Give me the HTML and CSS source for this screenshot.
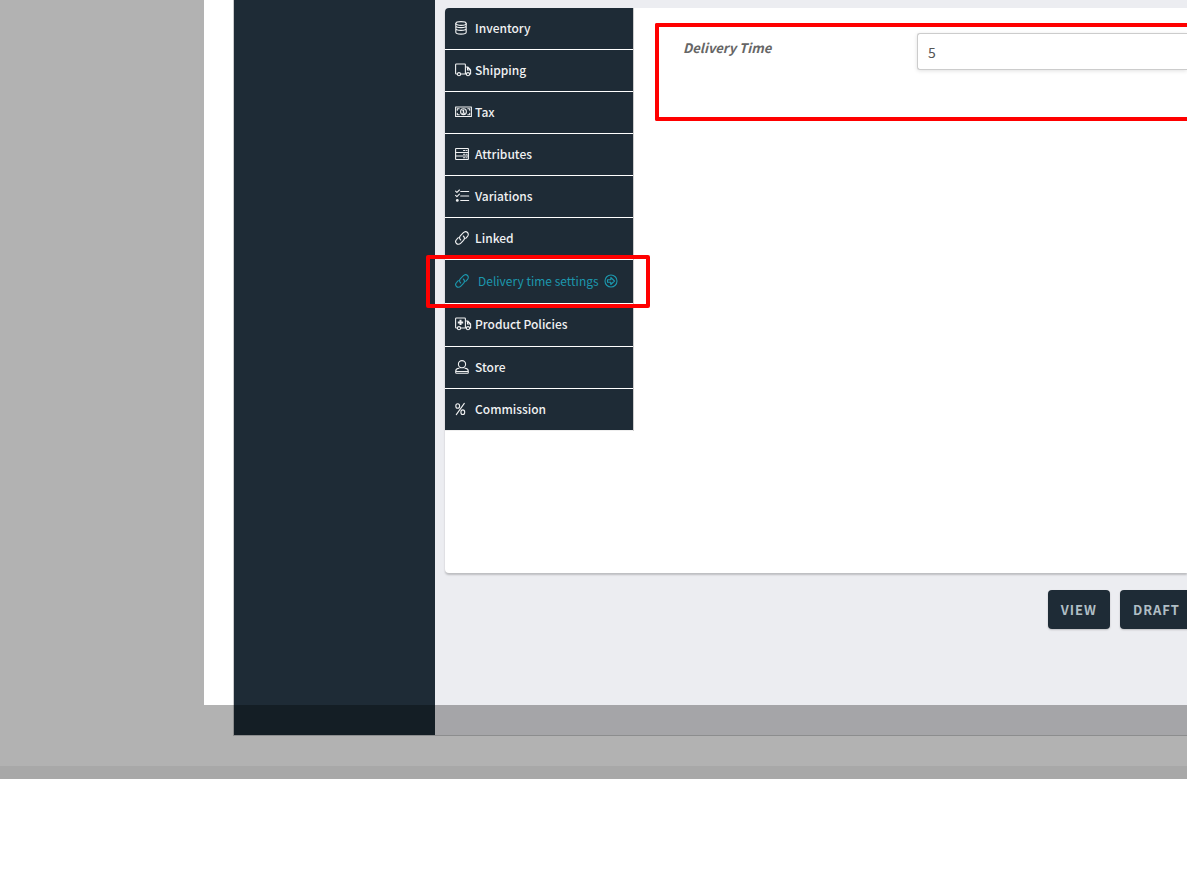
FILE: index.html
```html
<!DOCTYPE html>
<html lang="en">
<head>
  <meta charset="UTF-8" />
  <meta name="viewport" content="width=device-width, initial-scale=1.0" />
  <title>Delivery time settings</title>
  <link rel="stylesheet" href="styles.css">
</head>
<body>
  <div class="stage">
    <div class="dashboard">
      <aside class="sidebar"></aside>
      <main class="main">
        <section class="panel">
          <nav class="tabs">
            <a class="tab" href="#inventory">
              <svg class="icon" viewBox="0 0 18 14"><ellipse cx="6" cy="2.5" rx="5.2" ry="1.9"/><path d="M.8 2.5v2.2c0 1.1 2.3 1.9 5.2 1.9s5.2-.8 5.2-1.9V2.5M.8 5.2v2.3c0 1.1 2.3 1.9 5.2 1.9s5.2-.8 5.2-1.9V5.2M.8 8v3.2c0 1.1 2.3 1.9 5.2 1.9s5.2-.8 5.2-1.9V8"/></svg>
              <span>Inventory</span>
            </a>
            <a class="tab" href="#shipping">
              <svg class="icon" viewBox="0 0 18 14"><path d="M2.3 11H1.4a.8.8 0 0 1-.8-.8V1.8c0-.5.3-.8.8-.8h8.2c.5 0 .8.3.8.8V11H5.7M10.4 4h2.3l2.9 3v4h-.8M11.3 11h-.9M12.5 4.2V7h3"/><circle cx="4" cy="11.2" r="1.6"/><circle cx="13" cy="11.2" r="1.6"/></svg>
              <span>Shipping</span>
            </a>
            <a class="tab" href="#tax">
              <svg class="icon" viewBox="0 0 18 14"><rect x=".6" y="2" width="15.8" height="9.5"/><path d="M2.3 5.300V3.700h1.900M12.800 3.700h1.900v1.600M2.300 8.200v1.600h1.900M12.800 9.800h1.900V8.200"/><circle cx="8.5" cy="6.7" r="2.9"/><path d="M7.700 5.800l.9-.6v3M7.500 8.300h2.200"/></svg>
              <span>Tax</span>
            </a>
            <a class="tab" href="#attributes">
              <svg class="icon" viewBox="0 0 18 14"><rect x=".6" y="1.5" width="12.8" height="11" rx=".5"/><path d="M.6 5.500h12.800M.6 9h12.800M8.500 3.500h1.500M11.500 3.500h.5M8.500 7.300h1.500M11.500 7.300h.5M8.500 10.800h1.500M11.500 10.800h.5"/></svg>
              <span>Attributes</span>
            </a>
            <a class="tab" href="#variations">
              <svg class="icon" viewBox="0 0 18 14"><path d="M.6 2.200l1.300 1.200L4.400 1M.6 6.400l1.300 1.200 2.500-2.400M5.700 2.500h8M5.700 7h8M5.700 11.500h8"/><circle class="icon-fill" cx="2.3" cy="11.4" r="1.4"/></svg>
              <span>Variations</span>
            </a>
            <a class="tab" href="#linked">
              <svg class="icon" viewBox="0 0 18 14"><path d="M5.700 9C4.300 7.700 4.300 6 5.500 4.700l2.900-3C9.700.4 11.400.4 12.500 1.500s1.100 2.800-.2 4.100l-1.600 1.700M8.300 5c1.400 1.300 1.400 3 .2 4.300l-2.900 3c-1.300 1.300-3 1.300-4.100.2s-1.100-2.800.2-4.100l1.600-1.700"/></svg>
              <span>Linked</span>
            </a>
            <a class="tab tab-active" href="#delivery">
              <svg class="icon" viewBox="0 0 18 14"><path d="M5.700 9C4.300 7.700 4.300 6 5.500 4.700l2.900-3C9.700.4 11.400.4 12.500 1.500s1.100 2.800-.2 4.100l-1.600 1.700M8.300 5c1.400 1.300 1.400 3 .2 4.300l-2.900 3c-1.300 1.300-3 1.300-4.100.2s-1.100-2.800.2-4.100l1.600-1.700"/></svg>
              <span>Delivery time settings</span>
              <svg class="icon icon-arrow" viewBox="0 0 14 14"><circle cx="7" cy="7" r="6"/><path d="M3.500 5.700h3.300V3.500L10.500 7l-3.700 3.500V8.300H3.500z"/></svg>
            </a>
            <a class="tab tab-policies" href="#policies">
              <svg class="icon" viewBox="0 0 18 14"><path d="M2.3 11H1.4a.8.8 0 0 1-.8-.8V1.8c0-.5.3-.8.8-.8h8.2c.5 0 .8.3.8.8V11H5.7M10.4 4h2.3l2.9 3v4h-.8M11.3 11h-.9M12.5 4.2V7h3"/><circle cx="4" cy="11.2" r="1.6"/><circle cx="13" cy="11.2" r="1.6"/><path class="icon-bold" d="M5.5 2.700v5.400M2.800 5.400h5.400"/></svg>
              <span>Product Policies</span>
            </a>
            <a class="tab" href="#store">
              <svg class="icon" viewBox="0 0 18 14"><circle cx="7" cy="4.2" r="3.6"/><path d="M4 8.300C1.800 8.500.7 9.600.7 11.200v1.300c0 .5.3.8.8.8h11c.5 0 .8-.3.8-.8v-1.300c0-1.600-1.100-2.700-3.300-2.900M.8 11.500h12.400"/></svg>
              <span>Store</span>
            </a>
            <a class="tab" href="#commission">
              <svg class="icon" viewBox="0 0 18 14"><ellipse cx="2.7" cy="4" rx="1.9" ry="2.3"/><ellipse cx="7.8" cy="10.2" rx="1.9" ry="2.3"/><path d="M9.300 1.400L1.300 12.600"/></svg>
              <span>Commission</span>
            </a>
          </nav>
          <form class="field">
            <label class="field-label" for="deliveryTime">Delivery Time</label>
            <input class="field-input" type="text" id="deliveryTime" value="5" />
          </form>
        </section>
        <div class="actions">
          <button class="btn" type="button">VIEW</button>
          <button class="btn" type="button">DRAFT</button>
        </div>
      </main>
    </div>
    <div class="spotlight"></div>
  </div>
  <footer class="strip"></footer>
</body>
</html>
```

FILE: styles.css
```css
* {
  box-sizing: border-box;
}
body {
  margin: 0;
  background-color: #fff;
  font-family: "Noto Sans CJK SC", "Open Sans", sans-serif;
  overflow-x: hidden;
}
.stage {
  position: relative;
  overflow: hidden;
  padding: 0 0 30px 233px;
}
.dashboard {
  display: flex;
  min-height: 736px;
  border-left: 1px solid #c9cacc;
  border-bottom: 1px solid #c9cacc;
}
.sidebar {
  flex: 0 0 201px;
  background-color: #1e2b36;
}
.main {
  flex: 1;
  min-width: 0;
  padding: 8px 0 0 10px;
  background-color: #ecedf1;
}
.panel {
  display: flex;
  align-items: flex-start;
  min-height: 565px;
  background-color: #fff;
  border-radius: 4px 0 0 4px;
  box-shadow: 0 2px 2px rgba(0, 0, 0, 0.2);
}
.tabs {
  flex: 0 0 189px;
  border-right: 1px solid #ccc;
}
.tab {
  display: flex;
  align-items: center;
  gap: 2px;
  height: 42px;
  padding: 0 0 2px 10px;
  border-bottom: 1px solid #fff;
  background-color: #1e2b36;
  color: #f0f1f2;
  font-size: 12px;
  font-weight: 500;
  line-height: 18px;
  text-decoration: none;
}
.tab:first-child {
  border-top-left-radius: 4px;
}
.tab:last-child {
  border-bottom-color: #eee;
}
.tab-active {
  position: relative;
  gap: 5px;
  height: 44px;
  color: #1c97ad;
  font-weight: 400;
}
/* marker around the selected tab */
.tab-active::after {
  content: "";
  position: absolute;
  inset: -5px -17px -5px -19px;
  border: 4px solid #f00;
  border-radius: 2px;
}
.tab-policies {
  height: 43px;
}
.icon {
  flex: none;
  width: 18px;
  height: 14px;
  fill: none;
  stroke: currentColor;
  stroke-width: 1.1;
  stroke-linecap: round;
  stroke-linejoin: round;
}
.icon-arrow {
  width: 14px;
}
.icon-fill {
  fill: currentColor;
  stroke: none;
}
.icon-bold {
  stroke-width: 2;
  stroke-linecap: butt;
}
.field {
  flex: 1;
  display: flex;
  align-items: flex-start;
  min-width: 0;
  height: 98px;
  margin: 15px 0 0 21px;
  padding: 6px 0 0 24px;
  border: 4px solid #f00;
  border-right: 0;
  border-radius: 2px 0 0 2px;
}
.field-label {
  flex: 0 0 234px;
  padding-top: 4px;
  color: #666;
  font-size: 13px;
  font-style: italic;
  font-weight: 700;
  line-height: 22px;
}
.field-input {
  flex: 1;
  min-width: 0;
  height: 37px;
  padding: 0 10px;
  border: 1px solid #ccc;
  border-right: 0;
  border-radius: 3px 0 0 3px;
  box-shadow: 0 1px 4px rgba(0, 0, 0, 0.12);
  color: #555;
  font-family: "Noto Sans CJK SC", "Open Sans", sans-serif;
  font-size: 14px;
}
.actions {
  display: flex;
  justify-content: flex-end;
  gap: 10px;
  margin: 17px -6px 0 0;
}
.btn {
  height: 39px;
  padding: 0 13px;
  border: 0;
  border-radius: 4px;
  background-color: #1e2b36;
  box-shadow: 0 1px 2px rgba(0, 0, 0, 0.2);
  color: #b0bec5;
  font-family: inherit;
  font-size: 13px;
  font-weight: 700;
  letter-spacing: 1px;
}
/* dims everything outside the lit area */
.spotlight {
  position: absolute;
  inset: 0 0 61px 204px;
  box-shadow: 0 0 0 9999px rgba(0, 0, 0, 0.3);
  pointer-events: none;
}
.strip {
  height: 13px;
  background-color: #a8a8a8;
}
```
